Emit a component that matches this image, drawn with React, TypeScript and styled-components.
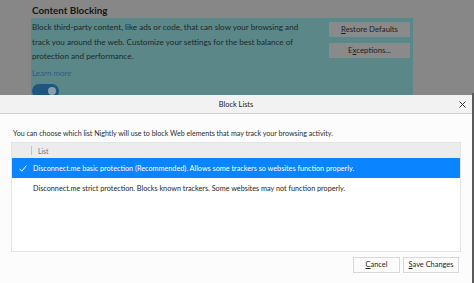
import React from 'react';
import styled, { createGlobalStyle } from 'styled-components';

const GlobalStyle = createGlobalStyle`
  html, body {
    margin: 0;
    padding: 0;
    background: #898989;
    font-family: Lato, "Noto Sans", sans-serif;
    overflow: hidden;
  }
`;

const Page = styled.div`
  position: relative;
  width: 474px;
  height: 283px;
  overflow: hidden;
  background: #878787;
`;

const Section = styled.div`
  padding: 4px 0 0 31px;
`;

const Heading = styled.div`
  font-size: 9.8px;
  font-weight: 700;
  color: #161616;
  line-height: 13px;
  height: 14px;
  margin-left: 1px;
`;

const InfoBox = styled.div`
  display: flex;
  justify-content: space-between;
  width: 382px;
  height: 100px;
  box-sizing: border-box;
  padding: 2px 3px 0 1px;
  background: #5b8788;
`;

const InfoText = styled.div`
  display: flex;
  flex-direction: column;
  font-size: 8.1px;
  line-height: 14.5px;
  color: #1c2929;
`;

const Line = styled.div`
  white-space: nowrap;
`;

const LearnMore = styled.div`
  margin-top: 2px;
  color: #2c5e85;
  font-size: 8px;
`;

const Toggle = styled.div`
  position: relative;
  margin-top: 4px;
  width: 27px;
  height: 14px;
  border-radius: 7px;
  background: #1f5680;
`;

const Knob = styled.div`
  position: absolute;
  right: 3px;
  top: 3px;
  width: 8px;
  height: 8px;
  border-radius: 50%;
  background: #8aa0a8;
`;

const ButtonCol = styled.div`
  display: flex;
  flex-direction: column;
  gap: 6px;
  padding-top: 2px;
`;

const PageButton = styled.div`
  width: 81px;
  height: 15px;
  box-sizing: border-box;
  border: 1px solid #7d9090;
  background: #8a8a8a;
  color: #1e1e1e;
  font-size: 7.8px;
  line-height: 13px;
  text-align: center;
  white-space: nowrap;
`;

const Dialog = styled.div`
  position: absolute;
  top: 95px;
  left: 0;
  width: 472px;
  height: 188px;
  background: #f8f8f8;
  display: flex;
  flex-direction: column;
`;

const DialogHeader = styled.div`
  position: relative;
  height: 19px;
  border-bottom: 1px solid #cfcfcf;
  background: #f2f2f2;
  display: flex;
  align-items: center;
  justify-content: center;
  font-size: 7.4px;
  color: #1a1a1a;
`;

const CloseButton = styled.div`
  position: absolute;
  right: 5px;
  top: 5px;
  width: 9px;
  height: 9px;
  display: flex;
  align-items: center;
  justify-content: center;
`;

const DialogBody = styled.div`
  flex: 1;
  background: #fcfcfc;
  padding: 0 11px;
  display: flex;
  flex-direction: column;
`;

const Description = styled.div`
  font-size: 7.1px;
  color: #2c2c2c;
  padding: 15px 0 0 2px;
  height: 13px;
  white-space: nowrap;
`;

const ListBox = styled.div`
  width: 450px;
  height: 110px;
  border: 1px solid #e4e4e4;
  box-sizing: border-box;
  background: #fff;
  display: flex;
  flex-direction: column;
`;

const ListHeader = styled.div`
  height: 15px;
  background: #ececec;
  display: flex;
  align-items: center;
  font-size: 6.8px;
  color: #707070;
`;

const HeaderSep = styled.div`
  width: 1px;
  height: 9px;
  background: #c4c4c4;
  margin: 0 6px 0 19px;
`;

const Row = styled.div<{ $selected?: boolean }>`
  height: 20px;
  display: flex;
  align-items: center;
  font-size: 7.25px;
  white-space: nowrap;
  background: ${({ $selected }) => ($selected ? '#0a84ff' : 'transparent')};
  color: ${({ $selected }) => ($selected ? '#ffffff' : '#1e1e1e')};
`;

const CheckCell = styled.div`
  width: 20px;
  display: flex;
  justify-content: center;
  padding-left: 1px;
`;

const Footer = styled.div`
  display: flex;
  justify-content: flex-end;
  gap: 3px;
  padding: 5px 2px 0 0;
  height: 26px;
`;

const DialogButton = styled.div<{ $width: number }>`
  width: ${({ $width }) => $width}px;
  height: 16px;
  box-sizing: border-box;
  border: 1px solid #d8d8d8;
  background: #fbfbfb;
  font-size: 7.4px;
  line-height: 14px;
  text-align: center;
  color: #1e1e1e;
  white-space: nowrap;
`;

const EdgeBar = styled.div`
  position: absolute;
  top: 93px;
  right: 0;
  width: 2px;
  height: 190px;
  background: #5a5a5a;
`;

const U = styled.span`
  text-decoration: underline;
`;

export default function App() {
  return (
    <Page>
      <GlobalStyle />
      <Section>
        <Heading>Content Blocking</Heading>
        <InfoBox>
          <InfoText>
            <Line>Block third-party content, like ads or code, that can slow your browsing and</Line>
            <Line>track you around the web. Customize your settings for the best balance of</Line>
            <Line>protection and performance.</Line>
            <LearnMore>Learn more</LearnMore>
            <Toggle>
              <Knob />
            </Toggle>
          </InfoText>
          <ButtonCol>
            <PageButton>
              <U>R</U>estore Defaults
            </PageButton>
            <PageButton>
              E<U>x</U>ceptions...
            </PageButton>
          </ButtonCol>
        </InfoBox>
      </Section>

      <Dialog>
        <DialogHeader>
          Block Lists
          <CloseButton>
            <svg width="7" height="7" viewBox="0 0 7 7">
              <path d="M0.5 0.5 L6.5 6.5 M6.5 0.5 L0.5 6.5" stroke="#333" strokeWidth="1" />
            </svg>
          </CloseButton>
        </DialogHeader>
        <DialogBody>
          <Description>You can choose which list Nightly will use to block Web elements that may track your browsing activity.</Description>
          <ListBox>
            <ListHeader>
              <HeaderSep />
              List
            </ListHeader>
            <Row $selected>
              <CheckCell>
                <svg width="8" height="7" viewBox="0 0 8 7">
                  <path d="M0.6 3.8 L2.8 6.2 L7.4 0.6" stroke="#fff" strokeWidth="1" fill="none" />
                </svg>
              </CheckCell>
              Disconnect.me basic protection (Recommended). Allows some trackers so websites function properly.
            </Row>
            <Row>
              <CheckCell />
              Disconnect.me strict protection. Blocks known trackers. Some websites may not function properly.
            </Row>
          </ListBox>
          <Footer>
            <DialogButton $width={47}>
              <U>C</U>ancel
            </DialogButton>
            <DialogButton $width={56}>
              <U>S</U>ave Changes
            </DialogButton>
          </Footer>
        </DialogBody>
      </Dialog>
      <EdgeBar />
    </Page>
  );
}
